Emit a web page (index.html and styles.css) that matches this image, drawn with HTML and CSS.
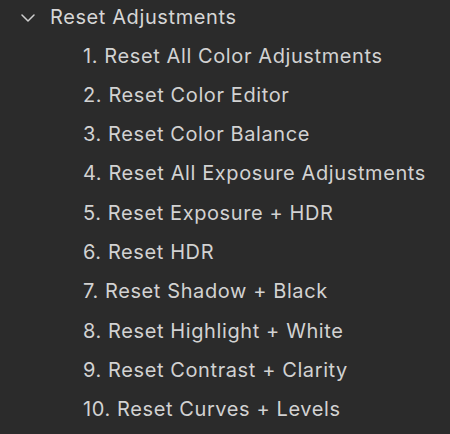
FILE: index.html
```html
<!DOCTYPE html>
<html>
<head>
<meta charset="utf-8">
<link rel="stylesheet" href="styles.css">
</head>
<body>
<div class="tree">
  <div class="header">
    <svg class="chev" width="14" height="10" viewBox="0 0 14 10"><path d="M1 2 L7 8 L13 2" fill="none" stroke="#cfcfcf" stroke-width="1.5" stroke-linecap="round" stroke-linejoin="round"/></svg>
    <span class="title">Reset Adjustments</span>
  </div>
  <ul class="items">
    <li>1. Reset All Color Adjustments</li>
    <li>2. Reset Color Editor</li>
    <li>3. Reset Color Balance</li>
    <li>4. Reset All Exposure Adjustments</li>
    <li>5. Reset Exposure + HDR</li>
    <li>6. Reset HDR</li>
    <li>7. Reset Shadow + Black</li>
    <li>8. Reset Highlight + White</li>
    <li>9. Reset Contrast + Clarity</li>
    <li>10. Reset Curves + Levels</li>
  </ul>
</div>
</body>
</html>
```
FILE: styles.css
```css
html, body {
  margin: 0;
  padding: 0;
  background: #2b2b2b;
  width: 450px;
  height: 434px;
  overflow: hidden;
}
.tree {
  font-family: Inter, "Noto Sans", sans-serif;
  font-size: 20px;
  letter-spacing: 0.6px;
  color: #d2d2d2;
}
.header {
  display: flex;
  align-items: center;
  height: 34px;
  padding-left: 21px;
  margin-bottom: 2.5px;
}
.chev {
  width: 14px;
  margin-right: 15px;
  margin-top: 2px;
}
.title {
  color: #d6d6d6;
}
.items {
  list-style: none;
  margin: 0;
  padding: 0 0 0 83px;
}
.items li {
  height: 39.33px;
  line-height: 39.33px;
  white-space: nowrap;
}
```
